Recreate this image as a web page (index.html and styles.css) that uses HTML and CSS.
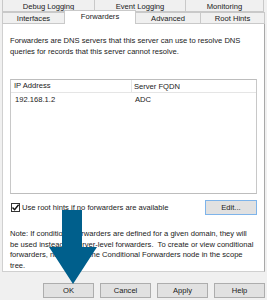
FILE: index.html
```html
<!DOCTYPE html>
<html>
<head>
<meta charset="utf-8">
<link rel="stylesheet" href="styles.css">
</head>
<body>
<div class="dialog">
  <div class="tabs">
    <div class="tabrow row1">
      <div class="tab t-debug">Debug Logging</div>
      <div class="tab t-event">Event Logging</div>
      <div class="tab t-mon">Monitoring</div>
    </div>
    <div class="tabrow row2">
      <div class="tab t-if">Interfaces</div>
      <div class="tab t-fwd active">Forwarders</div>
      <div class="tab t-adv">Advanced</div>
      <div class="tab t-root">Root Hints</div>
    </div>
  </div>
  <div class="panel">
    <p class="intro">Forwarders are DNS servers that this server can use to resolve DNS<br>queries for records that this server cannot resolve.</p>
    <div class="list">
      <div class="lhead">
        <div class="col c1">IP Address</div>
        <div class="col c2">Server FQDN</div>
      </div>
      <div class="lrow">
        <div class="col c1">192.168.1.2</div>
        <div class="col c2">ADC</div>
      </div>
    </div>
    <div class="optrow">
      <label class="check"><span class="box"><svg width="9" height="9" viewBox="0 0 9 9"><path d="M1.5 4.6 L3.6 6.8 L7.6 1.8" fill="none" stroke="#111" stroke-width="1.4"/></svg></span>Use root hints if no forwarders are available</label>
      <div class="btn edit">Edit...</div>
    </div>
    <p class="note">Note: If conditional forwarders are defined for a given domain, they will<br>be used instead of server-level forwarders.&nbsp; To create or view conditional<br>forwarders, navigate to the Conditional Forwarders node in the scope<br>tree.</p>
  </div>
  <div class="buttons">
    <div class="btn">OK</div>
    <div class="btn">Cancel</div>
    <div class="btn">Apply</div>
    <div class="btn">Help</div>
  </div>
  <svg class="arrow" width="52" height="76" viewBox="0 0 52 76"><path d="M15 0 H35 V37 H50 L26 74 L2 37 H15 Z" fill="#005f8c"/></svg>
</div>
</body>
</html>
```
FILE: styles.css
```css
html, body {
  margin: 0;
  padding: 0;
}
body {
  width: 267px;
  height: 300px;
  overflow: hidden;
  background: #f0f0f0;
  font-family: "Liberation Sans", Arial, sans-serif;
  font-size: 7.6px;
  color: #1a1a1a;
}
.dialog {
  position: relative;
  height: 300px;
  padding: 0 2px 0 2px;
  box-sizing: border-box;
}
.tabrow {
  display: flex;
  height: 12px;
}
.tab {
  box-sizing: border-box;
  border: 1px solid #c9c9c9;
  background: #f0f0f0;
  display: flex;
  align-items: center;
  justify-content: center;
  margin-left: -1px;
}
.tab:first-child {
  margin-left: 0;
}
.row1 .tab {
  border-top: none;
  padding-top: 1px;
}
.t-debug { width: 93px; }
.t-event { width: 92px; }
.t-mon { width: 79px; }
.t-if { width: 63px; }
.t-fwd { width: 72px; }
.t-adv { width: 66px; }
.t-root { width: 65px; }
.tab.active {
  background: #fff;
  border-bottom: none;
  height: 14px;
  margin-top: -2px;
  padding-bottom: 2px;
  position: relative;
  z-index: 1;
}
.panel {
  background: #fff;
  border: 1px solid #d0d0d0;
  border-right-color: #a8a8a8;
  border-top: none;
  height: 248px;
  box-sizing: border-box;
  padding: 11px 7px 0 7px;
  display: flex;
  flex-direction: column;
}
.intro {
  margin: 0;
  line-height: 11px;
  white-space: nowrap;
}
.list {
  margin-top: 22px;
  height: 116px;
  border: 1px solid #bdbdbd;
  border-right-color: #c8c8c8;
  border-left-color: #c8c8c8;
  box-sizing: border-box;
}
.lhead, .lrow {
  display: flex;
  align-items: center;
}
.lhead {
  border-bottom: 1px solid #e5e5e5;
  height: 12px;
}
.lrow {
  height: 11px;
  margin-top: 1px;
}
.col.c1 {
  width: 121px;
  padding-left: 3px;
  box-sizing: border-box;
}
.lhead .col.c1 {
  border-right: 1px solid #e5e5e5;
  height: 12px;
  line-height: 12px;
}
.col.c2 {
  padding-left: 2px;
}
.lrow .c1 { padding-left: 4px; }
.lrow .c2 { padding-left: 3px; }
.optrow {
  display: flex;
  justify-content: space-between;
  align-items: center;
  margin-top: 6px;
  height: 15px;
}
.check {
  display: flex;
  align-items: center;
  gap: 2px;
  margin-left: 1px;
}
.box {
  width: 9px;
  height: 9px;
  border: 1px solid #333;
  box-sizing: border-box;
  display: flex;
  align-items: center;
  justify-content: center;
  background: #fff;
}
.box svg {
  display: block;
  flex: none;
}
.btn {
  box-sizing: border-box;
  width: 51px;
  height: 15px;
  background: #e1e1e1;
  border: 1px solid #adadad;
  display: flex;
  align-items: center;
  justify-content: center;
}
.btn.edit {
  width: 52px;
  border-color: #7eb4ea;
}
.note {
  margin: 14px 0 0 0;
  line-height: 10.5px;
  white-space: nowrap;
}
.buttons {
  display: flex;
  justify-content: flex-end;
  gap: 6px;
  padding-top: 11px;
}
.arrow {
  position: absolute;
  left: 47px;
  top: 210px;
}
```
